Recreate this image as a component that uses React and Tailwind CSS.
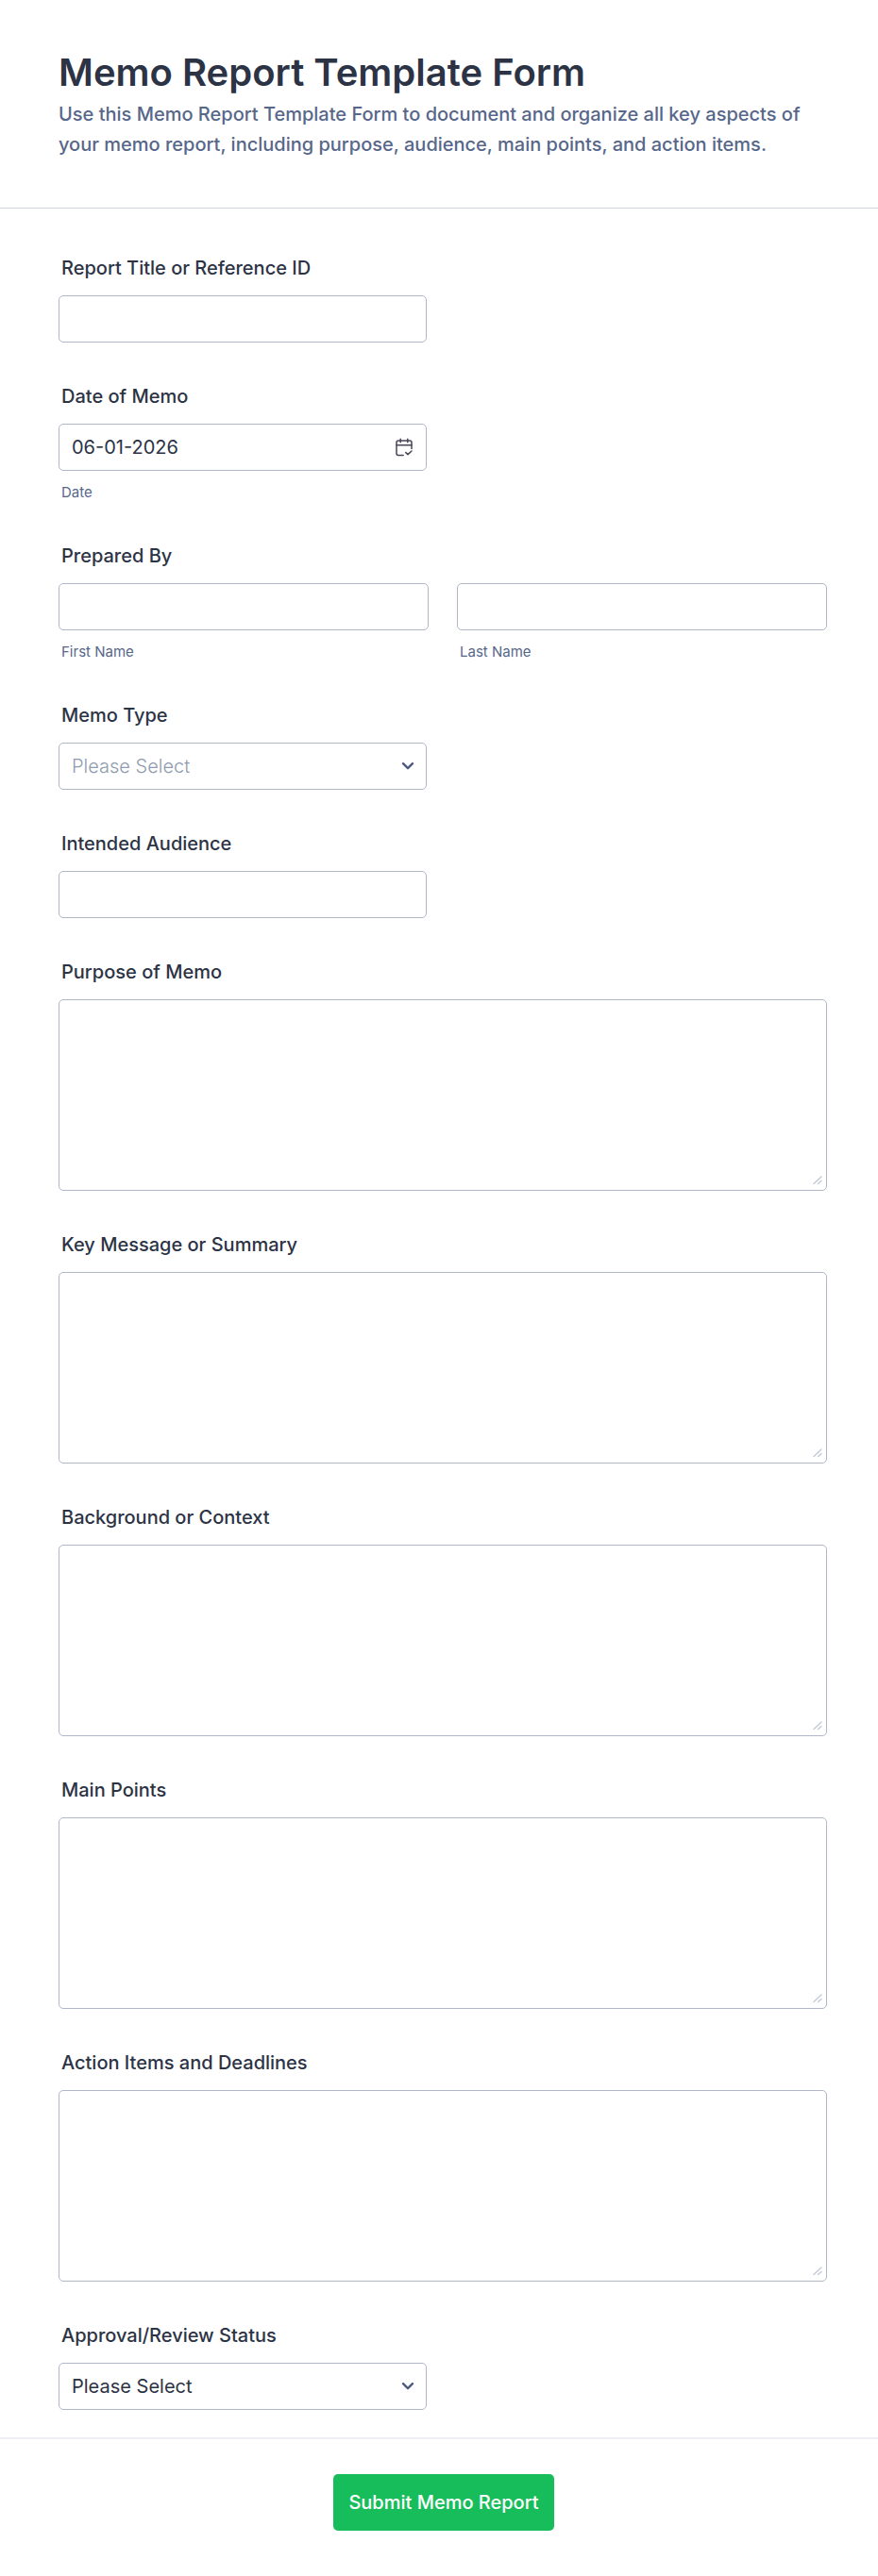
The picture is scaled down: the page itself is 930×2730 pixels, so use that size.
const controlClass =
  "block w-full rounded-[5px] border border-[#b1b7c9] bg-white text-xl leading-6 outline-none focus:border-blue-500";

function Label({ htmlFor, children }) {
  return (
    <label htmlFor={htmlFor} className="mb-[17px] block pl-[3px] text-xl leading-6 font-medium text-[#2c3345]">
      {children}
    </label>
  );
}

function SubLabel({ htmlFor, children }) {
  return (
    <label htmlFor={htmlFor} className="mt-[13px] block pl-[3px] text-[15px] leading-5 text-[#57678a]">
      {children}
    </label>
  );
}

function TextField({ id, label }) {
  return (
    <div className="max-w-[390px]">
      <Label htmlFor={id}>{label}</Label>
      <input id={id} type="text" className={`${controlClass} h-[50px] px-[13px] text-[#2c3345]`} />
    </div>
  );
}

function CalendarIcon() {
  return (
    <svg viewBox="0 0 18 20" className="h-5 w-[18px]" fill="none" stroke="#4a4458" strokeWidth="1.5" strokeLinecap="round" aria-hidden="true">
      <path d="M8.2 18.4H3a2 2 0 0 1-2-2V5a2 2 0 0 1 2-2h12a2 2 0 0 1 2 2v6.5" />
      <path d="M1 7.8h16M5.2 1.2v3.6M12.8 1.2v3.6" />
      <path d="M10.8 15.6l2.2 2 4-3.6" strokeLinejoin="round" />
    </svg>
  );
}

function DateField({ id, label }) {
  return (
    <div className="max-w-[390px]">
      <Label htmlFor={id}>{label}</Label>
      <div className="relative">
        <input id={id} type="text" defaultValue="06-01-2026" className={`${controlClass} h-[50px] pr-11 pl-[13px] text-[#2c3345]`} />
        <button type="button" aria-label="Choose date" className="absolute inset-y-0 right-[15px] flex items-center">
          <CalendarIcon />
        </button>
      </div>
      <SubLabel htmlFor={id}>Date</SubLabel>
    </div>
  );
}

function SelectField({ id, label, options, muted }) {
  return (
    <div className="max-w-[390px]">
      <Label htmlFor={id}>{label}</Label>
      <div className="relative">
        <select
          id={id}
          defaultValue=""
          className={`${controlClass} h-[50px] appearance-none pr-10 pl-[13px] ${muted ? "font-light text-[#8f9bae]" : "text-[#2c3345]"}`}
        >
          <option value="">Please Select</option>
          {options.map((option) => (
            <option key={option}>{option}</option>
          ))}
        </select>
        <svg
          viewBox="0 0 14 10"
          className="pointer-events-none absolute top-5 right-[13px] h-[10px] w-[14px]"
          fill="none"
          stroke="#525b80"
          strokeWidth="2.4"
          strokeLinecap="round"
          strokeLinejoin="round"
          aria-hidden="true"
        >
          <path d="M2 2.2l5 5 5-5" />
        </svg>
      </div>
    </div>
  );
}

function TextAreaField({ id, label }) {
  return (
    <div>
      <Label htmlFor={id}>{label}</Label>
      <div className="relative">
        <textarea id={id} className={`${controlClass} h-[203px] resize-none px-[13px] py-2 text-[#2c3345]`} />
        <svg
          viewBox="0 0 10 10"
          className="pointer-events-none absolute right-[5px] bottom-[6px] size-[10px]"
          fill="none"
          stroke="#c3cad8"
          strokeWidth="1.4"
          strokeLinecap="round"
          aria-hidden="true"
        >
          <path d="M1 8.6L9 1M5.6 8.6L9 5.4" />
        </svg>
      </div>
    </div>
  );
}

const longFields = [
  ["purpose", "Purpose of Memo"],
  ["summary", "Key Message or Summary"],
  ["background", "Background or Context"],
  ["main-points", "Main Points"],
  ["actions", "Action Items and Deadlines"],
];

export default function App() {
  return (
    <main className="min-h-screen bg-white font-['Inter',sans-serif]">
      <form onSubmit={(event) => event.preventDefault()}>
        <header className="border-b border-[#d0d4de] pt-[53px] pr-[54px] pb-[51px] pl-[62px]">
          <h1 className="text-[40px] leading-[48px] font-semibold text-[#2c3345]">Memo Report Template Form</h1>
          <p className="mt-1 text-xl leading-8 font-medium text-[#57678a]">
            Use this Memo Report Template Form to document and organize all key aspects of your memo report, including
            purpose, audience, main points, and action items.
          </p>
        </header>

        <div className="flex flex-col gap-[45px] pt-[51px] pr-[54px] pb-[29px] pl-[62px]">
          <TextField id="reference" label="Report Title or Reference ID" />
          <DateField id="memo-date" label="Date of Memo" />
          <div>
            <Label htmlFor="first-name">Prepared By</Label>
            <div className="grid grid-cols-2 gap-[30px]">
              <div>
                <input id="first-name" type="text" className={`${controlClass} h-[50px] px-[13px] text-[#2c3345]`} />
                <SubLabel htmlFor="first-name">First Name</SubLabel>
              </div>
              <div>
                <input id="last-name" type="text" className={`${controlClass} h-[50px] px-[13px] text-[#2c3345]`} />
                <SubLabel htmlFor="last-name">Last Name</SubLabel>
              </div>
            </div>
          </div>
          <SelectField id="memo-type" label="Memo Type" options={["Informational", "Directive", "Request"]} muted />
          <TextField id="audience" label="Intended Audience" />
          {longFields.map(([id, label]) => (
            <TextAreaField key={id} id={id} label={label} />
          ))}
          <SelectField id="status" label="Approval/Review Status" options={["Pending", "Reviewed", "Approved"]} />
        </div>

        <footer className="flex justify-center border-t-2 border-[#ebeff5] pt-[37px] pr-[54px] pb-12 pl-16">
          <button
            type="submit"
            className="h-[60px] min-w-[234px] rounded-[5px] bg-[#18bd5b] px-3 text-xl leading-6 font-medium text-white"
          >
            Submit Memo Report
          </button>
        </footer>
      </form>
    </main>
  );
}
